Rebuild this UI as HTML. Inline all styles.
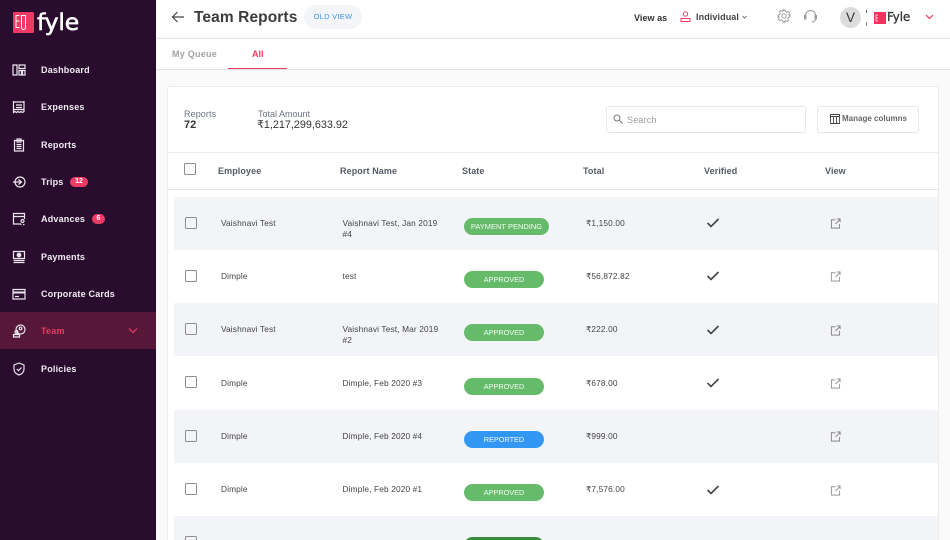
<!DOCTYPE html>
<html><head><meta charset="utf-8"><style>
*{box-sizing:border-box}
html,body{margin:0;padding:0;width:950px;height:540px;overflow:hidden;background:#fff;font-family:"Liberation Sans","DejaVu Sans",sans-serif}
#root{position:absolute;left:0;top:0;width:950px;height:540px;overflow:hidden;background:#fff}
.a{position:absolute;white-space:nowrap}
#side{position:absolute;left:0;top:0;width:156px;height:540px;background:#2a0c2f}
.nav{position:absolute;left:41px;font-size:9px;font-weight:700;color:#f1edf2;line-height:12px;letter-spacing:.2px}
.ic{position:absolute;left:12px;width:14px;height:14px}
.ic *{fill:none;stroke:#ece6ee;stroke-width:1.2}
.bd{position:absolute;background:#ef3a63;color:#fff;font-size:7px;line-height:10px;height:10px;border-radius:5px;text-align:center;font-weight:700}
.row{position:absolute;left:174px;width:764px;height:53.3px}
.odd{background:#f3f4f8}
.cb{position:absolute;left:11px;top:20px;width:12px;height:12px;border:1.2px solid #8e8e8e;border-radius:1.5px;background:#fff}
.odd .cb{background:#f3f4f8}
.t{position:absolute;font-size:8.3px;line-height:11px;color:#444;white-space:nowrap;letter-spacing:.14px}
.pill{position:absolute;left:290px;top:21.2px;width:80px;height:17px;border-radius:8.5px;background:#66bb6a;color:#f4fbf4;font-size:7.3px;line-height:17px;text-align:center}
.h{position:absolute;top:165px;font-size:9px;line-height:12px;font-weight:700;color:#555b66;letter-spacing:.1px;white-space:nowrap}
svg.ck{position:absolute;left:532px;top:20.5px;width:14px;height:12px}
svg.ext{position:absolute;left:656px;top:21.5px;width:11px;height:11px}
</style></head><body><div id="root">

<div id="side">
  <div class="a" style="left:13px;top:12px;width:21px;height:21px;background:#ef3a63;border-radius:1px"></div>
  <svg class="a" style="left:13px;top:12px" width="21" height="21" viewBox="0 0 21 21"><path d="M6.500 3.500H3v12h3.500M3 9h3.500M8.500 3.500h4v12a2 2 0 0 1-4 0z" fill="none" stroke="#fff" stroke-width="1"/></svg>
  <div class="a" style="left:37px;top:8px;font-size:23.500px;line-height:28px;font-weight:400;color:#fff;font-family:'DejaVu Sans',sans-serif;letter-spacing:-.2px;-webkit-text-stroke:.6px #fff">fyle</div>

  <svg class="ic" style="top:63px" viewBox="0 0 14 14"><path d="M1 2h4v10H1zM7 2h6v3.500H7zM7 7.500h2.500V12H7zM10.500 7.500H13V12h-2.500z"/></svg>
  <div class="nav" style="top:64px">Dashboard</div>
  <svg class="ic" style="top:100px" viewBox="0 0 14 14"><path d="M1.500 1v11.500l1.500-1 1.500 1 1.500-1 1.500 1 1.500-1 1.500 1 1.500-1V1M1.500 2h11M4 5h6M4 7.500h6M1.500 9.500h11"/></svg>
  <div class="nav" style="top:101px">Expenses</div>
  <svg class="ic" style="top:138px" viewBox="0 0 14 14"><path d="M2.500 2.500h9V13h-9zM5 1h4v3H5zM4.500 6.500h5M4.500 8.500h5M4.500 10.500h5"/></svg>
  <div class="nav" style="top:139px">Reports</div>
  <svg class="ic" style="top:175px" viewBox="0 0 14 14"><circle cx="8" cy="7" r="5"/><path d="M1 7h8M6.500 4.500L9.500 7l-3 2.500"/></svg>
  <div class="nav" style="top:176px">Trips</div>
  <div class="bd" style="left:70px;top:177px;width:18px">12</div>
  <svg class="ic" style="top:212px" viewBox="0 0 14 14"><path d="M9 12H1.500V1.500h11V7M1.500 4.500h11"/><circle cx="10.500" cy="9" r="1.500"/><path d="M8.500 12.500h1M11 12.500h1.500"/></svg>
  <div class="nav" style="top:213px">Advances</div>
  <div class="bd" style="left:92px;top:214px;width:13px">6</div>
  <svg class="ic" style="top:250px" viewBox="0 0 14 14"><path d="M1.500 1.500h11v7h-11zM1.500 10.500h11M1.500 12.500h11"/><circle cx="7" cy="5" r="1.800" style="fill:#ece6ee"/></svg>
  <div class="nav" style="top:251px">Payments</div>
  <svg class="ic" style="top:287px" viewBox="0 0 14 14"><path d="M1 2.500h12v9.500H1z"/><path d="M1 5.500h12" style="stroke-width:2"/><path d="M3 9.500h4"/></svg>
  <div class="nav" style="top:288px">Corporate Cards</div>

  <div class="a" style="left:0;top:312px;width:156px;height:37.300px;background:#561738"></div>
  <svg class="ic" style="top:324px" viewBox="0 0 14 14"><circle cx="8.500" cy="5.500" r="4.500"/><circle cx="8.500" cy="4.500" r="1.300"/><path d="M1.500 10.500h6V13h-6z"/><circle cx="4.500" cy="8" r="1.500"/></svg>
  <div class="nav" style="top:325px;color:#ef3a63">Team</div>
  <svg class="a" style="left:128px;top:327px" width="10" height="7" viewBox="0 0 10 7"><path d="M1 1.500l4 4 4-4" fill="none" stroke="#ef3a63" stroke-width="1.200"/></svg>

  <svg class="ic" style="top:362px" viewBox="0 0 14 14"><path d="M7 1l5 2v4c0 3-2.200 5-5 6-2.800-1-5-3-5-6V3z"/><path d="M4.800 7l1.700 1.700L9.500 5.500"/></svg>
  <div class="nav" style="top:362.500px">Policies</div>
</div>

<!-- header -->
<div class="a" style="left:156px;top:38px;width:794px;height:1px;background:#e3e3e3"></div>
<svg class="a" style="left:171px;top:11px" width="14" height="12" viewBox="0 0 14 12"><path d="M13 6H2M6.500 1L1.500 6l5 5" fill="none" stroke="#444" stroke-width="1.200"/></svg>
<div class="a" style="left:194px;top:8px;font-size:15.500px;line-height:19px;font-weight:700;color:#3c3c3c;letter-spacing:.1px">Team Reports</div>
<div class="a" style="left:304px;top:5px;width:58px;height:24px;border-radius:12px;background:#f3f5f9;color:#3b93ee;font-size:7.500px;line-height:24px;text-align:center;letter-spacing:.25px">OLD VIEW</div>
<div class="a" style="left:634px;top:12px;font-size:9px;line-height:12px;font-weight:700;color:#333;letter-spacing:.05px">View as</div>
<svg class="a" style="left:680px;top:11px" width="11" height="12" viewBox="0 0 11 12"><circle cx="5.500" cy="3" r="2.200" fill="none" stroke="#ef3a63"/><path d="M1 7.500h9V10.500H1z" fill="none" stroke="#ef3a63"/></svg>
<div class="a" style="left:696px;top:11px;font-size:9px;line-height:12px;font-weight:700;color:#444;letter-spacing:.1px">Individual</div>
<svg class="a" style="left:742px;top:15px" width="5" height="4" viewBox="0 0 5 4"><path d="M.5 1l2 2 2-2" fill="none" stroke="#555" stroke-width=".8"/></svg>
<svg class="a" style="left:777px;top:9px" width="14" height="14" viewBox="0 0 14 14"><circle cx="7" cy="7" r="2.200" fill="none" stroke="#999"/><path d="M6 1h2l.4 1.600 1.400.6 1.400-.8 1.400 1.400-.8 1.400.6 1.400L13 6v2l-1.600.4-.6 1.400.8 1.400-1.400 1.400-1.400-.8-1.400.6L8 13H6l-.4-1.600-1.400-.6-1.400.8-1.400-1.400.8-1.400-.6-1.400L1 8V6l1.600-.4.6-1.400-.8-1.400 1.400-1.400 1.400.8 1.400-.6z" fill="none" stroke="#999" stroke-width=".9"/></svg>
<svg class="a" style="left:803px;top:9px" width="15" height="15" viewBox="0 0 15 15"><path d="M2.500 9V6.500a5 5 0 0 1 10 0V9M1.500 6.500h1.500V10H1.500zM12 6.500h1.500V10H12zM12.500 10c0 2-1.500 3-4 3" fill="none" stroke="#999"/></svg>
<div class="a" style="left:840px;top:7px;width:21px;height:21px;border-radius:50%;background:#dcdcdc;color:#333;font-size:13.500px;line-height:21px;text-align:center">V</div>
<div class="a" style="left:866px;top:10px;width:1px;height:3px;background:#666"></div>
<div class="a" style="left:866px;top:22px;width:1px;height:4px;background:#888"></div>
<div class="a" style="left:874px;top:12px;width:12px;height:12px;background:#f5315f"></div>
<svg class="a" style="left:874px;top:12px" width="12" height="12" viewBox="0 0 12 12"><path d="M4 3H2v6h2M2 6h2" fill="none" stroke="#fff" stroke-width=".7"/></svg>
<div class="a" style="left:887px;top:10px;font-size:12px;line-height:15px;font-weight:400;color:#333;font-family:'DejaVu Sans',sans-serif;letter-spacing:-.1px;-webkit-text-stroke:.3px #333">Fyle</div>
<svg class="a" style="left:925px;top:14px" width="9" height="6" viewBox="0 0 9 6"><path d="M1 1l3.500 3.500L8 1" fill="none" stroke="#ef3a63" stroke-width="1.200"/></svg>

<!-- tabs -->
<div class="a" style="left:172px;top:48px;font-size:9px;line-height:12px;font-weight:700;color:#a3a3a3;letter-spacing:.25px">My Queue</div>
<div class="a" style="left:252px;top:48px;font-size:9px;line-height:12px;font-weight:700;color:#ef3a63">All</div>
<div class="a" style="left:228px;top:68px;width:59px;height:1px;background:#ef3a63"></div>
<div class="a" style="left:156px;top:69px;width:794px;height:1px;background:#e3e3e3"></div>

<!-- content -->
<div class="a" style="left:156px;top:70px;width:794px;height:470px;background:#fafafa"></div>
<div class="a" style="left:167px;top:86px;width:771.500px;height:470px;background:#fff;border:1px solid #ececec;border-radius:3px"></div>

<div class="a" style="left:184px;top:107.500px;font-size:9px;line-height:12px;color:#6e7480;letter-spacing:.1px">Reports</div>
<div class="a" style="left:184px;top:119px;font-size:11px;line-height:13px;color:#333;font-weight:700">72</div>
<div class="a" style="left:258px;top:107.500px;font-size:9px;line-height:12px;color:#6e7480">Total Amount</div>
<div class="a" style="left:257px;top:119px;font-size:10.800px;line-height:13px;color:#333">₹1,217,299,633.92</div>

<div class="a" style="left:606px;top:106px;width:200px;height:27px;border:1px solid #e8e8e8;border-radius:3px"></div>
<svg class="a" style="left:613px;top:114px" width="10" height="10" viewBox="0 0 10 10"><circle cx="4" cy="4" r="3" fill="none" stroke="#777"/><path d="M6.300 6.300L9.500 9.500" stroke="#777"/></svg>
<div class="a" style="left:627px;top:114px;font-size:9px;line-height:12px;color:#9a9a9a;letter-spacing:.2px">Search</div>
<div class="a" style="left:817px;top:106px;width:102px;height:27px;border:1px solid #e8e8e8;border-radius:3px"></div>
<svg class="a" style="left:830px;top:114px" width="10" height="10" viewBox="0 0 10 10"><path d="M.5 .5h9v9h-9zM.5 2.500h9M3.500 2.500v7M6.500 2.500v7" fill="none" stroke="#444" stroke-width=".9"/></svg>
<div class="a" style="left:842px;top:113px;font-size:8px;line-height:12px;font-weight:700;color:#666">Manage columns</div>

<div class="a" style="left:168px;top:152px;width:770px;height:1px;background:#ececec"></div>
<div class="a" style="left:168px;top:189px;width:770px;height:1px;background:#e6e6e6"></div>
<div class="a" style="left:184px;top:163px;width:12px;height:12px;border:1.200px solid #8e8e8e;border-radius:1.500px"></div>
<div class="h" style="left:218px">Employee</div>
<div class="h" style="left:340px">Report Name</div>
<div class="h" style="left:462px">State</div>
<div class="h" style="left:583px">Total</div>
<div class="h" style="left:704px">Verified</div>
<div class="h" style="left:825px">View</div>

<div class="row odd" style="top:196.500px"><div class="cb"></div><div class="t" style="left:47px;top:21.300px">Vaishnavi Test</div><div class="t" style="left:168.500px;top:21.300px;line-height:11px">Vaishnavi Test, Jan 2019<br>#4</div><div class="pill" style="width:85px;font-size:7.500px">PAYMENT PENDING</div><div class="t" style="left:412px;top:21.300px">₹1,150.00</div><svg class="ck" viewBox="0 0 14 12"><path d="M1.500 6l3.500 3.500 7.500-7.500" fill="none" stroke="#444" stroke-width="1.600"/></svg><svg class="ext" viewBox="0 0 12 12"><path d="M6 2H1.500v9h9V6.500M6 6.500L11 1.500M7.500 1H11v3.500" fill="none" stroke="#777" stroke-width=".9"/></svg></div>

<div class="row" style="top:249.800px"><div class="cb"></div><div class="t" style="left:47px;top:21.300px">Dimple</div><div class="t" style="left:168.500px;top:21.300px">test</div><div class="pill">APPROVED</div><div class="t" style="left:412px;top:21.300px">₹56,872.82</div><svg class="ck" viewBox="0 0 14 12"><path d="M1.500 6l3.500 3.500 7.500-7.500" fill="none" stroke="#444" stroke-width="1.600"/></svg><svg class="ext" viewBox="0 0 12 12"><path d="M6 2H1.500v9h9V6.500M6 6.500L11 1.500M7.500 1H11v3.500" fill="none" stroke="#888" stroke-width=".9"/></svg></div>

<div class="row odd" style="top:303.100px"><div class="cb"></div><div class="t" style="left:47px;top:21.300px">Vaishnavi Test</div><div class="t" style="left:168.500px;top:21.300px">Vaishnavi Test, Mar 2019<br>#2</div><div class="pill">APPROVED</div><div class="t" style="left:412px;top:21.300px">₹222.00</div><svg class="ck" viewBox="0 0 14 12"><path d="M1.500 6l3.500 3.500 7.500-7.500" fill="none" stroke="#444" stroke-width="1.600"/></svg><svg class="ext" viewBox="0 0 12 12"><path d="M6 2H1.500v9h9V6.500M6 6.500L11 1.500M7.500 1H11v3.500" fill="none" stroke="#777" stroke-width=".9"/></svg></div>

<div class="row" style="top:356.400px"><div class="cb"></div><div class="t" style="left:47px;top:21.300px">Dimple</div><div class="t" style="left:168.500px;top:21.300px">Dimple, Feb 2020 #3</div><div class="pill">APPROVED</div><div class="t" style="left:412px;top:21.300px">₹678.00</div><svg class="ck" viewBox="0 0 14 12"><path d="M1.500 6l3.500 3.500 7.500-7.500" fill="none" stroke="#444" stroke-width="1.600"/></svg><svg class="ext" viewBox="0 0 12 12"><path d="M6 2H1.500v9h9V6.500M6 6.500L11 1.500M7.500 1H11v3.500" fill="none" stroke="#888" stroke-width=".9"/></svg></div>

<div class="row odd" style="top:409.700px"><div class="cb"></div><div class="t" style="left:47px;top:21.300px">Dimple</div><div class="t" style="left:168.500px;top:21.300px">Dimple, Feb 2020 #4</div><div class="pill" style="background:#3197f3">REPORTED</div><div class="t" style="left:412px;top:21.300px">₹999.00</div><svg class="ext" viewBox="0 0 12 12"><path d="M6 2H1.500v9h9V6.500M6 6.500L11 1.500M7.500 1H11v3.500" fill="none" stroke="#777" stroke-width=".9"/></svg></div>

<div class="row" style="top:463px"><div class="cb"></div><div class="t" style="left:47px;top:21.300px">Dimple</div><div class="t" style="left:168.500px;top:21.300px">Dimple, Feb 2020 #1</div><div class="pill">APPROVED</div><div class="t" style="left:412px;top:21.300px">₹7,576.00</div><svg class="ck" viewBox="0 0 14 12"><path d="M1.500 6l3.500 3.500 7.500-7.500" fill="none" stroke="#444" stroke-width="1.600"/></svg><svg class="ext" viewBox="0 0 12 12"><path d="M6 2H1.500v9h9V6.500M6 6.500L11 1.500M7.500 1H11v3.500" fill="none" stroke="#888" stroke-width=".9"/></svg></div>

<div class="row odd" style="top:516.300px;height:24px;overflow:hidden"><div class="cb"></div><div class="pill" style="background:#388e3c"></div></div>

</div></body></html>
